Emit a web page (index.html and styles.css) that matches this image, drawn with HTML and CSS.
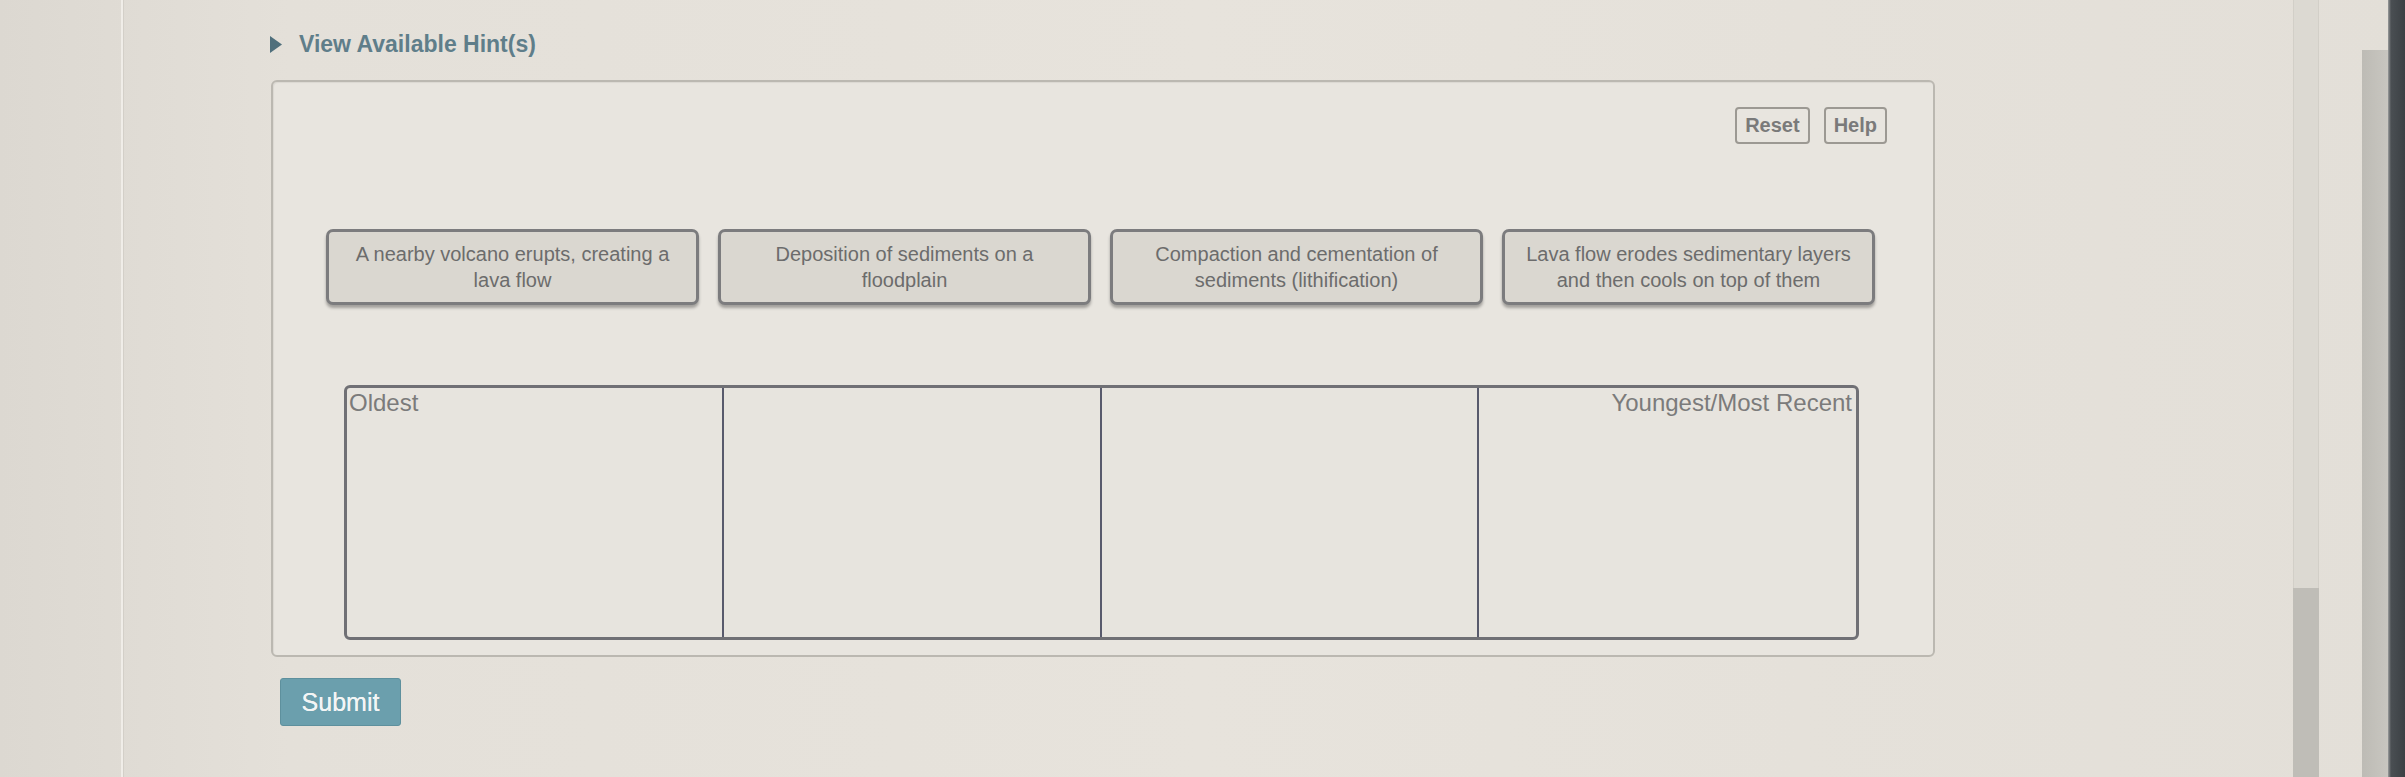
FILE: index.html
```html
<!DOCTYPE html>
<html lang="en">
<head>
<meta charset="utf-8">
<title>Drag and drop sequence</title>
<link rel="stylesheet" href="styles.css">
</head>
<body>
<div class="screen">
  <aside class="gutter"></aside>
  <main class="content">
    <div class="hint-toggle">
      <svg class="hint-arrow" width="12" height="17" viewBox="0 0 12 17"><path d="M0 0 L12 8.5 L0 17 Z" fill="#4f6f7c"/></svg>
      <span class="hint-label">View Available Hint(s)</span>
    </div>
    <section class="panel">
      <div class="toolbar">
        <button class="tool-btn">Reset</button>
        <button class="tool-btn">Help</button>
      </div>
      <div class="cards">
        <div class="card">A nearby volcano erupts, creating a lava flow</div>
        <div class="card">Deposition of sediments on a floodplain</div>
        <div class="card">Compaction and cementation of sediments (lithification)</div>
        <div class="card">Lava flow erodes sedimentary layers and then cools on top of them</div>
      </div>
      <div class="dropzone">
        <div class="slot"><span class="slot-label">Oldest</span></div>
        <div class="slot"></div>
        <div class="slot"></div>
        <div class="slot slot-last"><span class="slot-label">Youngest/Most Recent</span></div>
      </div>
    </section>
    <button class="submit">Submit</button>
  </main>
  <div class="track track-a"><div class="track-light"></div><div class="track-thumb"></div></div>
  <div class="track-gap"></div>
  <div class="track track-b"><div class="track-top"></div><div class="track-body"></div></div>
  <div class="bezel"></div>
</div>
</body>
</html>
```

FILE: styles.css
```css
html, body {
  margin: 0;
  padding: 0;
  height: 100%;
}

body {
  background: #e4e0d9;
  font-family: "Liberation Sans", Arial, sans-serif;
  overflow: hidden;
}

.screen {
  display: flex;
  height: 777px;
  width: 2405px;
  background: linear-gradient(90deg, #dcd8d1 0%, #e4e0d9 12%, #e7e3dc 50%, #e3dfd8 100%);
}

.gutter {
  width: 121px;
  flex: none;
  border-right: 2px solid #f0ede8;
  box-shadow: 1px 0 0 #d3cfc8;
}

.content {
  flex: 1;
  display: flex;
  flex-direction: column;
  align-items: flex-start;
  padding-left: 148px;
}

.hint-toggle {
  display: flex;
  align-items: center;
  margin-top: 30px;
  margin-left: -1px;
  height: 28px;
  gap: 17px;
}

.hint-label {
  font-size: 23px;
  line-height: 28px;
  font-weight: bold;
  color: #5f7e8a;
}

.panel {
  margin-top: 22px;
  width: 1664px;
  height: 577px;
  box-sizing: border-box;
  border: 2px solid #bbb8b1;
  border-radius: 6px;
  background: #e8e5df;
  box-shadow: inset 1px 1px 1px rgba(0,0,0,0.06);
  padding: 25px 46px 15px 0;
  display: flex;
  flex-direction: column;
}

.toolbar {
  display: flex;
  justify-content: flex-end;
  gap: 14px;
}

.tool-btn {
  height: 37px;
  box-sizing: border-box;
  padding: 0 8px;
  border: 2px solid #9c9993;
  border-radius: 4px;
  background: transparent;
  font-family: "Liberation Sans", Arial, sans-serif;
  font-size: 20px;
  font-weight: bold;
  color: #7a7a7a;
}

.cards {
  display: flex;
  gap: 19px;
  margin-top: 85px;
  margin-left: 53px;
}

.card {
  width: 373px;
  height: 76px;
  box-sizing: border-box;
  border: 3px solid #7c7c7e;
  border-radius: 7px;
  background: #dad7d0;
  box-shadow: 0 3px 3px rgba(0,0,0,0.3);
  padding: 0 15px;
  display: flex;
  align-items: center;
  justify-content: center;
  text-align: center;
  font-size: 20px;
  line-height: 26px;
  color: #6c6c6c;
}

.dropzone {
  display: grid;
  grid-template-columns: repeat(4, 1fr);
  margin-top: 80px;
  margin-left: 71px;
  width: 1515px;
  height: 256px;
  box-sizing: border-box;
  border: 3px solid #707075;
  border-radius: 6px;
  background: #e7e4de;
}

.slot {
  border-right: 2px solid #585a6c;
  padding: 1px 4px 0 2px;
}

.slot-last {
  border-right: none;
  text-align: right;
}

.slot-label {
  font-size: 24px;
  line-height: 28px;
  color: #7b7b7b;
}

.submit {
  margin-top: 21px;
  margin-left: 9px;
  width: 121px;
  height: 48px;
  border: 1px solid #5e909d;
  border-radius: 3px;
  background: #6b9fad;
  color: #f3f5f5;
  font-family: "Liberation Sans", Arial, sans-serif;
  font-size: 25px;
  padding: 0;
  text-shadow: 0 0 0.6px #f3f5f5;
}

.track {
  width: 26px;
  flex: none;
  display: flex;
  flex-direction: column;
}

.track-a .track-light {
  height: 588px;
  background: #dcd9d2;
  box-shadow: inset 1px 0 0 #d2cfc8, inset -1px 0 0 #d2cfc8;
}

.track-a .track-thumb {
  flex: 1;
  background: #bfbdb7;
}

.track-gap {
  width: 43px;
  flex: none;
}

.track-b .track-top {
  height: 50px;
}

.track-b .track-body {
  flex: 1;
  background: linear-gradient(90deg, #bdbbb5, #c8c6c0);
}

.bezel {
  width: 17px;
  flex: none;
  background: linear-gradient(90deg, #9a9c9c 0, #4a4f53 3px, #3b4044 100%);
}
```
